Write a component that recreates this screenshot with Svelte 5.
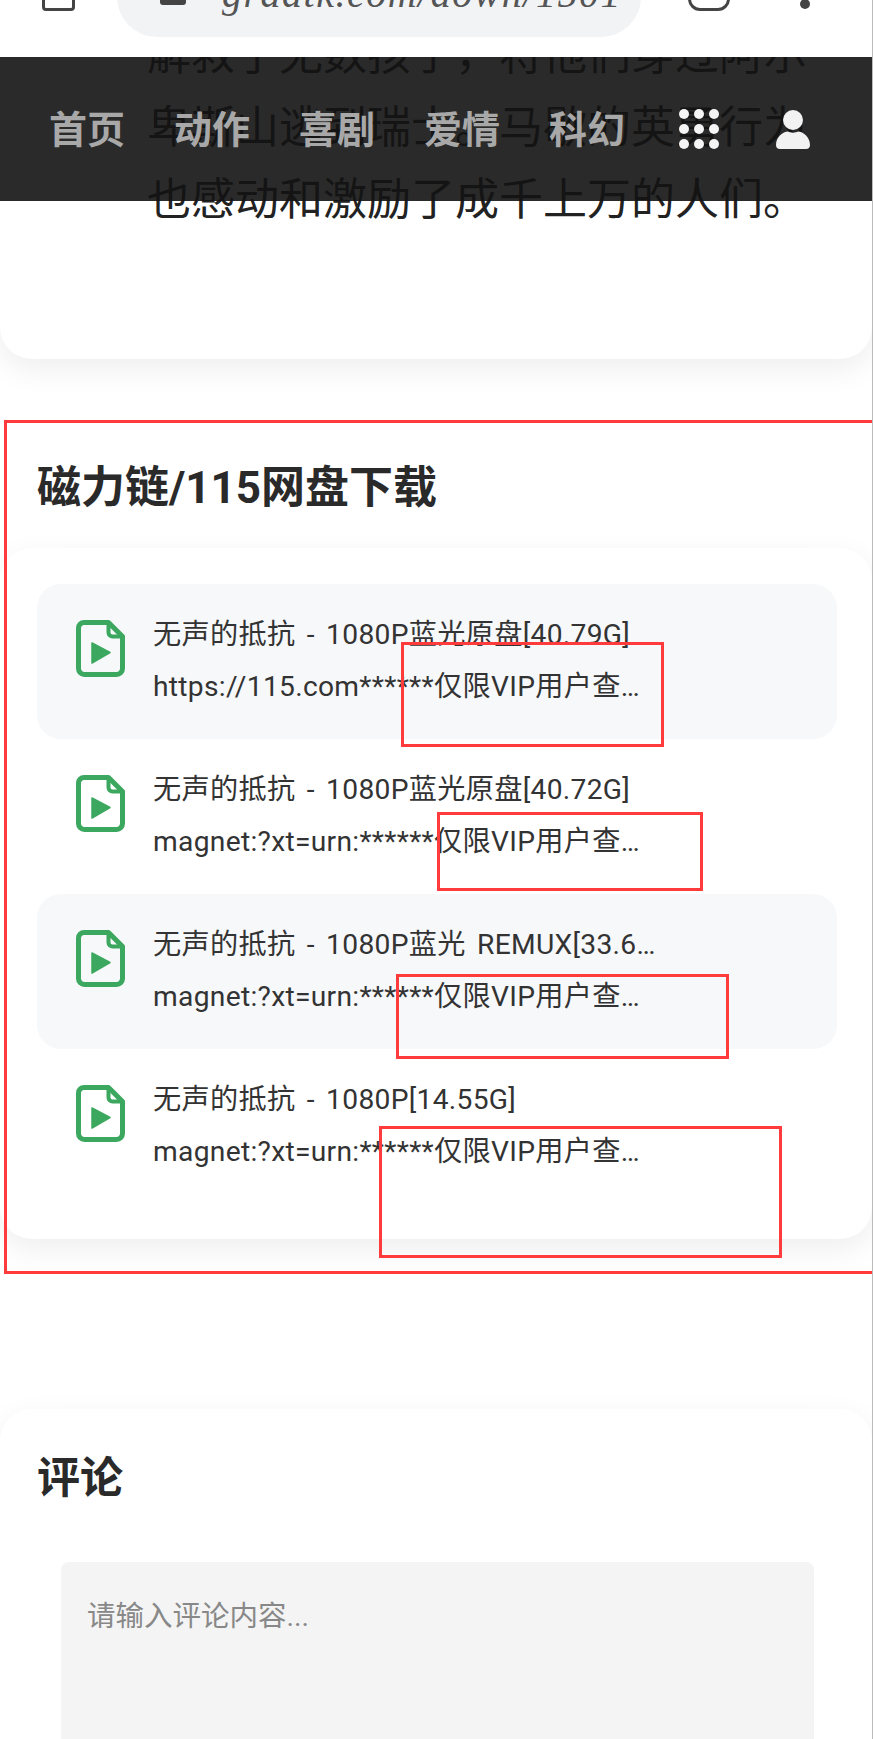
<script>
  const navItems = ['首页', '动作', '喜剧', '爱情', '科幻'];

  const articleLines = [
    '解救了无数孩子，将他们穿过阿尔',
    '卑斯山逃到瑞士。马歇的英勇行为',
    '也感动和激励了成千上万的人们。',
  ];

  const downloads = [
    { title: '无声的抵抗 - 1080P蓝光原盘[40.79G]', link: 'https://115.com******仅限VIP用户查看权限' },
    { title: '无声的抵抗 - 1080P蓝光原盘[40.72G]', link: 'magnet:?xt=urn:******仅限VIP用户查看权限' },
    { title: '无声的抵抗 - 1080P蓝光 REMUX[33.65G]', link: 'magnet:?xt=urn:******仅限VIP用户查看权限' },
    { title: '无声的抵抗 - 1080P[14.55G]', link: 'magnet:?xt=urn:******仅限VIP用户查看权限' },
  ];

  // hand-drawn annotation boxes on top of the screenshot
  const marks = [
    { x: 4, y: 420, w: 872, h: 854 },
    { x: 401, y: 642, w: 263, h: 105 },
    { x: 437, y: 812, w: 266, h: 79 },
    { x: 396, y: 974, w: 333, h: 85 },
    { x: 379, y: 1126, w: 403, h: 132 },
  ];
</script>

<div class="page">
  <header class="chrome">
    <span class="tab-box left"></span>
    <div class="url-pill">
      <span class="lock"></span>
      <span class="url">gradtk.com/down/1501</span>
    </div>
    <span class="tab-box right"></span>
    <span class="dot"></span>
  </header>

  <main class="scroll">
    <section class="card article">
      {#each articleLines as line}
        <p>{line}</p>
      {/each}
    </section>

    <h2 class="section-title">磁力链/115网盘下载</h2>
    <section class="card list">
      {#each downloads as item}
        <div class="item">
          <svg class="file-icon" width="49" height="57" viewBox="0 0 49 57" fill="none">
            <path d="M8 2.5H32.5L46.5 16.5V48.5A6 6 0 0 1 40.5 54.5H8.5A6 6 0 0 1 2.5 48.5V8A5.5 5.5 0 0 1 8 2.5Z" stroke="#3ca85f" stroke-width="5" stroke-linejoin="round" />
            <path d="M32.5 3V12.5A4 4 0 0 0 36.5 16.5H46" stroke="#3ca85f" stroke-width="4" stroke-linejoin="round" />
            <path d="M16 23L34 32.5L16 43Z" fill="#3ca85f" stroke="#3ca85f" stroke-width="1.5" stroke-linejoin="round" />
          </svg>
          <div class="item-text">
            <div class="line title">{item.title}</div>
            <div class="line">{item.link}</div>
          </div>
        </div>
      {/each}
    </section>

    <section class="card comments">
      <h2 class="comment-title">评论</h2>
      <textarea class="comment-box" placeholder="请输入评论内容..."></textarea>
    </section>
  </main>

  <nav class="nav">
    {#each navItems as item}
      <span class="nav-item">{item}</span>
    {/each}
    <svg class="grid-icon" width="40" height="40" viewBox="0 0 40 40" fill="#f5f5f5">
      {#each [5, 20, 35] as cy}
        {#each [5, 20, 35] as cx}
          <circle {cx} {cy} r="5" />
        {/each}
      {/each}
    </svg>
    <svg class="user-icon" width="34" height="39" viewBox="0 0 34 39" fill="#f2f2f2">
      <circle cx="17" cy="10" r="10" />
      <path d="M0 35C0 27 7 21.5 12 21.5C14 23 20 23 22 21.5C27 21.5 34 27 34 35C34 37.5 32.5 39 30 39H4C1.5 39 0 37.5 0 35Z" />
    </svg>
  </nav>

  {#each marks as m}
    <div class="mark" style="left:{m.x}px;top:{m.y}px;width:{m.w}px;height:{m.h}px"></div>
  {/each}
</div>

<style>
  :global(body) {
    margin: 0;
    background: #fff;
  }

  .page {
    position: relative;
    width: 873px;
    height: 1739px;
    overflow: hidden;
    display: flex;
    flex-direction: column;
    box-sizing: border-box;
    border-right: 1px solid #bbb;
    background: #fff;
    font-family: Roboto, "Noto Sans CJK SC", sans-serif;
    color: #333;
  }

  /* browser bar, scrolled so only its lower edge shows */
  .chrome {
    position: relative;
    flex: none;
    height: 57px;
    display: flex;
    align-items: flex-start;
    background: #fff;
    z-index: 2;
    overflow: hidden;
  }

  .tab-box {
    flex: none;
    box-sizing: border-box;
    height: 40px;
    margin-top: -29px;
    border: 3px solid #444;
    border-radius: 8px;
  }
  .tab-box.left {
    width: 33px;
    margin-left: 42px;
    border-radius: 4px;
  }
  .tab-box.right {
    width: 42px;
    margin-left: 47px;
    border-radius: 12px;
  }

  .url-pill {
    flex: none;
    width: 524px;
    height: 77px;
    margin: -40px 0 0 42px;
    padding-left: 43px;
    box-sizing: border-box;
    display: flex;
    gap: 36px;
    background: #f2f3f5;
    border-radius: 0 0 40px 40px;
  }

  .lock {
    width: 26px;
    height: 10px;
    margin-top: 35px;
    border-radius: 3px;
    background: #444;
  }

  .url {
    margin-top: 9px;
    font-family: "Liberation Serif", serif;
    font-style: italic;
    font-size: 40px;
    line-height: 50px;
    letter-spacing: 1.5px;
    color: #555;
    white-space: nowrap;
  }

  .dot {
    flex: none;
    width: 10px;
    height: 10px;
    margin: -1px 0 0 70px;
    border-radius: 50%;
    background: #444;
  }

  .scroll {
    flex: 1;
    min-height: 0;
  }

  .card {
    background: #fff;
    border-radius: 32px;
    box-shadow: 0 10px 30px rgba(0, 0, 0, 0.07);
  }

  .article {
    margin-top: -38px;
    padding: 0 0 122px 147px;
    border-radius: 0 0 32px 32px;
  }
  .article p {
    margin: 0;
    font-size: 44px;
    line-height: 72.5px;
    color: #222;
    white-space: nowrap;
  }

  .section-title {
    margin: 99px 0 30px;
    padding-left: 37px;
    font-size: 44px;
    line-height: 60px;
    font-weight: 700;
    color: #2a2a2a;
  }

  .list {
    padding: 36px 35px 35px 37px;
  }

  .item {
    display: flex;
    gap: 28px;
    height: 155px;
    box-sizing: border-box;
    padding: 36px 0 0 39px;
    border-radius: 24px;
  }
  .item:nth-child(odd) {
    background: #f7f8fa;
  }

  .file-icon {
    flex: none;
  }

  .item-text {
    width: 511px;
    margin-top: -11px;
  }
  .line {
    font-size: 28.2px;
    letter-spacing: 0.3px;
    line-height: 52px;
    white-space: nowrap;
    overflow: hidden;
    text-overflow: ellipsis;
  }
  .line.title {
    word-spacing: 4px;
  }

  .comments {
    margin-top: 170px;
    padding: 39px 58px 0 61px;
  }

  .comment-title {
    margin: 0 0 54px -24px;
    font-size: 43px;
    line-height: 60px;
    font-weight: 700;
    color: #2a2a2a;
  }

  .comment-box {
    display: block;
    width: 100%;
    height: 300px;
    box-sizing: border-box;
    padding: 36px 26px;
    border: none;
    border-radius: 8px;
    background: #f4f4f4;
    font-family: Roboto, "Noto Sans CJK SC", sans-serif;
    font-size: 28.5px;
    line-height: 38px;
    resize: none;
  }
  .comment-box::placeholder {
    color: #888;
  }

  .nav {
    position: absolute;
    top: 57px;
    left: 0;
    right: 0;
    height: 144px;
    box-sizing: border-box;
    padding-left: 49px;
    display: flex;
    align-items: center;
    gap: 49px;
    background: rgba(19, 19, 19, 0.9);
    z-index: 1;
  }

  .nav-item {
    margin-bottom: 5px;
    font-size: 38px;
    font-weight: 700;
    color: #a8a8a8;
    white-space: nowrap;
  }

  .grid-icon {
    flex: none;
    margin-left: 5px;
  }
  .user-icon {
    flex: none;
    margin-left: 8px;
  }

  .mark {
    position: absolute;
    box-sizing: border-box;
    border: 3px solid #ff3b3b;
    z-index: 3;
  }
</style>
